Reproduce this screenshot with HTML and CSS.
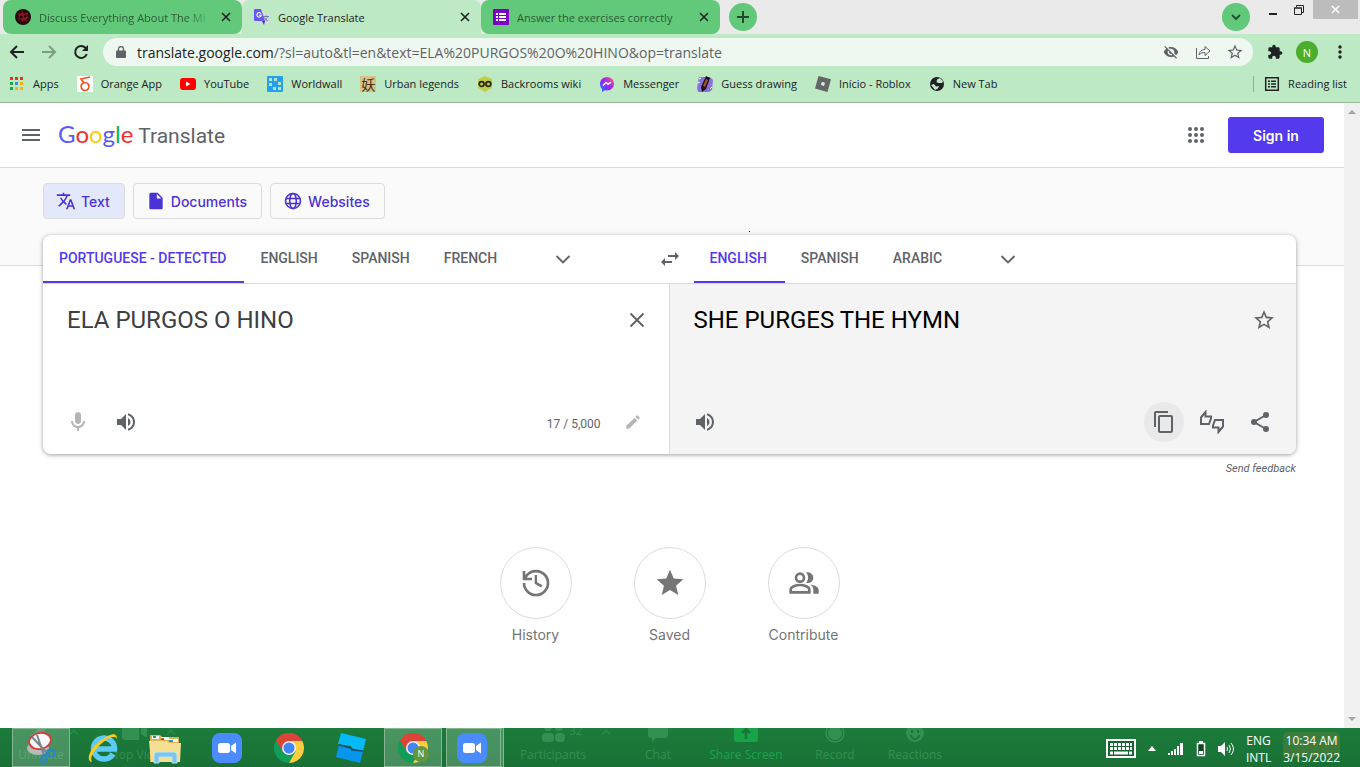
FILE: index.html
```html
<!DOCTYPE html>
<html lang="en">
<head>
    <meta charset="UTF-8">
    <meta name="viewport" content="width=device-width, initial-scale=1.0">
    <title>Google Translate</title>
    <link rel="stylesheet" href="styles.css">
</head>
<body>
    <!-- Shared icons -->
    <svg class="defs" width="0" height="0">
        <symbol id="i-close" viewBox="0 0 10 10"><path d="M1 1l8 8M9 1L1 9" fill="none" stroke="currentColor" stroke-width="1.6"/></symbol>
        <symbol id="i-volume" viewBox="0 0 24 24"><path d="M3 9v6h4l5 5V4L7 9H3zm13.500 3c0-1.770-1.020-3.290-2.500-4.030v8.050c1.480-.730 2.500-2.250 2.500-4.020zM14 3.230v2.060c2.890.860 5 3.540 5 6.710s-2.110 5.850-5 6.710v2.060c4.010-.910 7-4.490 7-8.770s-2.990-7.860-7-8.770z"/></symbol>
        <symbol id="i-star" viewBox="0 0 24 24"><path d="M22 9.240l-7.190-.620L12 2 9.190 8.630 2 9.240l5.460 4.730L5.820 21 12 17.270 18.180 21l-1.630-7.030L22 9.240zM12 15.400l-3.760 2.270 1-4.280-3.320-2.880 4.380-.380L12 6.100l1.710 4.040 4.380.380-3.320 2.880 1 4.280L12 15.400z"/></symbol>
        <symbol id="i-chevron" viewBox="0 0 24 24"><path d="M5.500 9l6.500 6.500L18.500 9" fill="none" stroke="currentColor" stroke-width="1.800"/></symbol>
        <symbol id="i-zoom" viewBox="0 0 32 32"><rect x="1" y="1" width="30" height="30" rx="8" fill="#4a8cff"/><rect x="7" y="11" width="12" height="10" rx="2.500" fill="#fff"/><path d="M20 14l5-3.500v11L20 18z" fill="#fff"/></symbol>
        <symbol id="i-chrome" viewBox="0 0 32 32"><path d="M16 16L3 8.500A15 15 0 0 1 29 8.500z" fill="#db4437"/><path d="M16 16l-13-7.500A15 15 0 0 0 16 31l7-12z" fill="#0f9d58"/><path d="M16 9h13.300A15 15 0 0 1 16 31l6.500-11.500z" fill="#ffcd40"/><path d="M3 8.500L9.800 19.500 16 9h13.200A15 15 0 0 0 3 8.500z" fill="#db4437"/><circle cx="16" cy="16" r="7" fill="#f1f1f1"/><circle cx="16" cy="16" r="5.500" fill="#4285f4"/></symbol>
    </svg>

    <!-- Tab strip -->
    <div class="tabstrip">
        <div class="tab">
            <svg class="favicon" viewBox="0 0 16 16"><circle cx="8" cy="8" r="8" fill="#250a0d"/><path d="M3 4l3 1 1-3 2 3 4-2-1 4 2 2-3 1 1 3-3-2-2 2-1-3-3 1 1-4z" fill="#8d1822"/><circle cx="6" cy="8" r="1.500" fill="#180406"/><circle cx="10" cy="7" r="1.500" fill="#180406"/></svg>
            <span class="tab-title fade">Discuss Everything About The Mi</span>
            <button class="tab-close" aria-label="Close tab"><svg width="10" height="10"><use href="#i-close"/></svg></button>
        </div>
        <div class="tab active">
            <svg class="favicon" viewBox="0 0 16 16"><rect x="6" y="4" width="10" height="11" rx="1" fill="#d5d9e2"/><path d="M9 7.500h6M12 6.500v1M10 12c2-1 3-2.500 3.500-4.500M10.500 8.500c1 2 2 3 3.500 3.500" stroke="#70839c" fill="none"/><path d="M1 0h6l4 12H1a1 1 0 0 1-1-1V1a1 1 0 0 1 1-1z" fill="#6558f5"/><path d="M8 12h3l-1 4z" fill="#3a35b5"/><path d="M7 4.700A2.200 2.200 0 1 0 7.300 6.200H5.200" fill="none" stroke="#fff" stroke-width="1.100"/></svg>
            <span class="tab-title">Google Translate</span>
            <button class="tab-close" aria-label="Close tab"><svg width="10" height="10"><use href="#i-close"/></svg></button>
        </div>
        <div class="tab">
            <svg class="favicon" viewBox="0 0 16 16"><rect width="16" height="16" rx="1" fill="#7d00c4"/><path d="M3 4h2v2H3zM6 4h7v2H6zM3 7h2v2H3zM6 7h7v2H6zM3 10h2v2H3zM6 10h7v2H6z" fill="#fff"/></svg>
            <span class="tab-title">Answer the exercises correctly</span>
            <button class="tab-close" aria-label="Close tab"><svg width="10" height="10"><use href="#i-close"/></svg></button>
        </div>
        <button class="round-btn" aria-label="New tab"><svg width="14" height="14" viewBox="0 0 14 14"><path d="M7 1v12M1 7h12" stroke="currentColor" stroke-width="2"/></svg></button>
        <div class="window-controls">
            <button class="round-btn" aria-label="Search tabs"><svg width="12" height="12" viewBox="0 0 12 12"><path d="M2 4l4 4 4-4" fill="none" stroke="currentColor" stroke-width="1.800"/></svg></button>
            <button class="win-btn" aria-label="Minimize"><svg width="10" height="12" viewBox="0 0 10 12"><path d="M1 9h8v2H1z"/></svg></button>
            <button class="win-btn" aria-label="Restore"><svg width="10" height="10" viewBox="0 0 10 10"><path d="M.5 3h7v6.500h-7zM0 3h8M2.500 2V.5h7v7H8" fill="none" stroke="currentColor"/></svg></button>
            <button class="win-btn win-close" aria-label="Close"><svg width="9" height="9"><use href="#i-close"/></svg></button>
        </div>
    </div>

    <!-- Address bar -->
    <div class="toolbar">
        <button class="nav-btn" aria-label="Back"><svg width="16" height="16" viewBox="0 0 16 16"><path d="M15 8H2M8 2L2 8l6 6" fill="none" stroke="currentColor" stroke-width="2"/></svg></button>
        <button class="nav-btn dim" aria-label="Forward"><svg width="16" height="16" viewBox="0 0 16 16"><path d="M1 8h13M8 2l6 6-6 6" fill="none" stroke="currentColor" stroke-width="2"/></svg></button>
        <button class="nav-btn" aria-label="Reload"><svg width="16" height="16" viewBox="0 0 16 16"><path d="M13.800 10A6 6 0 1 1 12.500 3.800L14 5.500" fill="none" stroke="currentColor" stroke-width="2"/><path d="M15 1v6H9z"/></svg></button>
        <div class="omnibox">
            <svg class="lock" width="10" height="12" viewBox="0 0 10 12"><path d="M1 4.500h8a1 1 0 0 1 1 1V11a1 1 0 0 1-1 1H1a1 1 0 0 1-1-1V5.500a1 1 0 0 1 1-1z"/><path d="M2.500 5V3a2.500 2.500 0 0 1 5 0v2" fill="none" stroke="currentColor" stroke-width="1.300"/></svg>
            <label for="address">translate.google.com</label>
            <input type="text" id="address" value="/?sl=auto&amp;tl=en&amp;text=ELA%20PURGOS%20O%20HINO&amp;op=translate">
            <button class="nav-btn" aria-label="Third-party cookies blocked"><svg width="16" height="16" viewBox="0 0 24 24"><path d="M12 7c2.760 0 5 2.240 5 5 0 .650-.130 1.260-.360 1.830l2.920 2.920c1.510-1.260 2.700-2.890 3.430-4.750-1.730-4.390-6-7.500-11-7.500-1.400 0-2.740.250-3.980.700l2.160 2.160C10.740 7.130 11.350 7 12 7zM2 4.270l2.280 2.280.460.460C3.080 8.300 1.780 10.020 1 12c1.730 4.390 6 7.500 11 7.500 1.550 0 3.030-.300 4.380-.840l.420.420L19.730 22 21 20.730 3.270 3 2 4.270zM7.530 9.800l1.550 1.550c-.050.210-.080.430-.080.650 0 1.660 1.340 3 3 3 .220 0 .440-.030.650-.080l1.550 1.550c-.670.330-1.410.530-2.200.530-2.760 0-5-2.240-5-5 0-.790.200-1.530.530-2.200z"/></svg></button>
            <button class="nav-btn" aria-label="Share this page"><svg width="16" height="16" viewBox="0 0 16 16" fill="none" stroke="currentColor"><path d="M1.500 4v10.500h12V12M4 11c.500-4 3-5.500 6-5.500v-3L15 7l-5 4.500v-3c-2.500 0-4.500.500-6 2.500z"/></svg></button>
            <button class="nav-btn" aria-label="Bookmark this page"><svg width="18" height="18"><use href="#i-star"/></svg></button>
        </div>
        <button class="nav-btn" aria-label="Extensions"><svg width="16" height="16" viewBox="0 0 24 24"><path d="M20.500 11H19V7c0-1.100-.900-2-2-2h-4V3.500C13 2.120 11.880 1 10.500 1S8 2.120 8 3.500V5H4c-1.100 0-1.990.900-1.990 2v3.800H3.500c1.490 0 2.700 1.210 2.700 2.700s-1.210 2.700-2.700 2.700H2V20c0 1.100.900 2 2 2h3.800v-1.500c0-1.490 1.210-2.700 2.700-2.700s2.700 1.210 2.700 2.700V22H17c1.100 0 2-.900 2-2v-4h1.500c1.380 0 2.500-1.120 2.500-2.500S21.880 11 20.500 11z"/></svg></button>
        <button class="avatar">N</button>
        <button class="nav-btn" aria-label="Menu"><svg width="4" height="14" viewBox="0 0 4 14"><circle cx="2" cy="2" r="1.700"/><circle cx="2" cy="7" r="1.700"/><circle cx="2" cy="12" r="1.700"/></svg></button>
    </div>

    <!-- Bookmarks -->
    <nav class="bookmarks">
        <a href="#"><svg viewBox="0 0 16 16"><path d="M1 1h3v3H1zM6 1h3v3H6zM11 1h3v3h-3z" fill="#e53328"/><path d="M1 6h3v3H1z" fill="#1ba84c"/><path d="M6 6h3v3H6z" fill="#4285f4"/><path d="M11 6h3v3h-3zM6 11h3v3H6zM11 11h3v3h-3z" fill="#f7b50c"/><path d="M1 11h3v3H1z" fill="#1ba84c"/></svg>Apps</a>
        <a href="#"><svg viewBox="0 0 16 16"><rect width="16" height="16" fill="#fff"/><path d="M13 1L4 3l3 4M8 6.500a4 4 0 1 0 .1 0" fill="none" stroke="#f4511e" stroke-width="1.700"/></svg>Orange App</a>
        <a href="#"><svg viewBox="0 0 16 16"><rect y="2" width="16" height="12" rx="3" fill="#f00"/><path d="M6 5.500v5L10.500 8z" fill="#fff"/></svg>YouTube</a>
        <a href="#"><svg viewBox="0 0 16 16"><rect width="16" height="16" rx="1" fill="#24a0ed"/><path d="M2 2h3v3H2zM7 2h3v3H7zM2 7h3v3H2zM11 6h3v3h-3zM6 11h3v3H6zM11 11h3v3h-3z" fill="#b5e3cf"/></svg>Worldwall</a>
        <a href="#"><span class="kanji">妖</span>Urban legends</a>
        <a href="#"><svg viewBox="0 0 16 16"><path d="M8 0l7 3v9l-7 4-7-4V3z" fill="#c3cf49"/><g fill="none" stroke="#272e16" stroke-width="1.800"><circle cx="4.600" cy="8" r="2.400"/><circle cx="11.400" cy="8" r="2.400"/></g></svg>Backrooms wiki</a>
        <a href="#"><svg viewBox="0 0 16 16"><defs><linearGradient id="msg" x1="0" y1="1" x2="1" y2="0"><stop offset="0" stop-color="#0a84ff"/><stop offset=".5" stop-color="#a01cff"/><stop offset="1" stop-color="#ff5e72"/></linearGradient></defs><path d="M8 1c4 0 7 3 7 6.800S12 14.500 8 14.500L6 14.300 3 16v-3C1.500 11.500 1 10 1 7.800 1 4 4 1 8 1z" fill="url(#msg)"/><path d="M4 9.500L7 6.500l2 1.700 3-2" fill="none" stroke="#fff" stroke-width="1.600"/></svg>Messenger</a>
        <a href="#"><svg viewBox="0 0 16 16"><path d="M2 1h11l3 3-1 10-3 2H1l-1-4z" fill="#8a72dc"/><path d="M9 0l4 2-4 11-4 3-1-5z" fill="#1b1319"/><path d="M9 3l2 1-3 7-2-1z" fill="#a9522b"/><path d="M2 3l2-1M1 7l2-1M13 13l2-2" stroke="#fff"/></svg>Guess drawing</a>
        <a href="#"><svg viewBox="0 0 16 16"><path d="M3.500 0L16 3.300 12.500 16 0 12.500z" fill="#646667"/><path d="M6.800 5.800l3.200.900-.900 3.200-3.200-.900z" fill="#d6eedb"/></svg>Início - Roblox</a>
        <a href="#"><svg viewBox="0 0 16 16"><circle cx="8" cy="8" r="7" fill="#202124"/><path d="M8 3.500l3-1.500 3 3-1 2H9L7.500 6zM2 9l3-1 2 2.500 3-.5-1 2.500-3 1.500z" fill="#bde9c4"/></svg>New Tab</a>
        <a href="#" class="reading-list"><svg viewBox="0 0 16 16"><path d="M1.700 1.700h12.600v12.600H1.700z" fill="none" stroke="currentColor" stroke-width="1.500"/><path d="M4 4.500h2v1.500H4zM7 4.500h5v1.500H7zM4 7.300h2v1.500H4zM7 7.300h5v1.500H7zM4 10h2v1.500H4zM7 10h5v1.500H7z"/></svg>Reading list</a>
    </nav>

    <!-- Page -->
    <div class="viewport">
        <div class="page">
            <header class="header">
                <button class="icon-btn" aria-label="Main menu"><svg width="18" height="12" viewBox="0 0 18 12"><path d="M0 0h18v2H0zM0 5h18v2H0zM0 10h18v2H0z"/></svg></button>
                <a href="#" class="logo"><span class="google"><span class="b">G</span><span class="r">o</span><span class="y">o</span><span class="b">g</span><span class="g">l</span><span class="r">e</span></span> <span class="product">Translate</span></a>
                <button class="icon-btn apps" aria-label="Google apps"><svg width="16" height="16" viewBox="0 0 16 16"><g><circle cx="2" cy="2" r="2"/><circle cx="8" cy="2" r="2"/><circle cx="14" cy="2" r="2"/><circle cx="2" cy="8" r="2"/><circle cx="8" cy="8" r="2"/><circle cx="14" cy="8" r="2"/><circle cx="2" cy="14" r="2"/><circle cx="8" cy="14" r="2"/><circle cx="14" cy="14" r="2"/></g></svg></button>
                <button class="sign-in">Sign in</button>
            </header>

            <div class="modes">
                <button class="mode selected"><svg width="20" height="20" viewBox="0 0 24 24"><path d="M12.870 15.070l-2.540-2.510.030-.030c1.740-1.940 2.980-4.170 3.710-6.530H17V4h-7V2H8v2H1v1.990h11.170C11.500 7.920 10.440 9.750 9 11.350 8.070 10.320 7.300 9.190 6.690 8h-2c.730 1.630 1.730 3.170 2.980 4.560l-5.090 5.020L4 19l5-5 3.110 3.110.760-2.040zM18.500 10h-2L12 22h2l1.120-3h4.750L21 22h2l-4.500-12zm-2.620 7l1.620-4.330L19.120 17h-3.240z"/></svg>Text</button>
                <button class="mode"><svg width="20" height="20" viewBox="0 0 24 24"><path d="M6 2c-1.100 0-2 .9-2 2v16c0 1.100.9 2 2 2h12c1.100 0 2-.9 2-2V8l-6-6H6zm7 7V3.500L18.500 9H13z"/></svg>Documents</button>
                <button class="mode"><svg width="20" height="20" viewBox="0 0 24 24" fill="none" stroke="currentColor" stroke-width="1.900"><circle cx="12" cy="12" r="9"/><ellipse cx="12" cy="12" rx="4" ry="9"/><path d="M4 9h16M4 15h16"/></svg>Websites</button>
            </div>

            <main class="content">
                <div class="card">
                    <span class="speck"></span>
                    <div class="languages">
                        <div class="lang-group">
                            <button class="lang selected">PORTUGUESE - DETECTED</button>
                            <button class="lang">ENGLISH</button>
                            <button class="lang">SPANISH</button>
                            <button class="lang">FRENCH</button>
                            <button class="more" aria-label="More source languages"><svg width="24" height="24"><use href="#i-chevron"/></svg></button>
                        </div>
                        <button class="swap" aria-label="Swap languages"><svg width="24" height="24" viewBox="0 0 24 24"><path d="M6.990 11L3 15l3.990 4v-3H14v-2H6.990v-3zM21 9l-3.990-4v3H10v2h7.010v3L21 9z"/></svg></button>
                        <div class="lang-group">
                            <button class="lang selected">ENGLISH</button>
                            <button class="lang">SPANISH</button>
                            <button class="lang">ARABIC</button>
                            <button class="more" aria-label="More target languages"><svg width="24" height="24"><use href="#i-chevron"/></svg></button>
                        </div>
                    </div>
                    <div class="panes">
                        <div class="pane source">
                            <div class="pane-top">
                                <textarea rows="1" aria-label="Source text">ELA PURGOS O HINO</textarea>
                                <button class="icon-btn" aria-label="Clear"><svg width="24" height="24" viewBox="0 0 24 24"><path d="M5.500 5.500l13 13M18.500 5.500l-13 13" fill="none" stroke="currentColor" stroke-width="1.900"/></svg></button>
                            </div>
                            <div class="pane-bottom">
                                <button class="icon-btn faded" aria-label="Translate by voice"><svg width="24" height="24" viewBox="0 0 24 24"><path d="M12 14c1.660 0 3-1.340 3-3V5c0-1.660-1.340-3-3-3S9 3.340 9 5v6c0 1.660 1.340 3 3 3z"/><path d="M17 11c0 2.760-2.240 5-5 5s-5-2.240-5-5H5c0 3.530 2.610 6.430 6 6.920V21h2v-3.080c3.390-.490 6-3.390 6-6.920h-2z"/></svg></button>
                                <button class="icon-btn" aria-label="Listen to source text"><svg width="24" height="24"><use href="#i-volume"/></svg></button>
                                <span class="count">17 / 5,000</span>
                                <button class="icon-btn faded" aria-label="Handwrite"><svg width="18" height="18" viewBox="0 0 24 24"><path d="M3 17.250V21h3.750L17.810 9.940l-3.750-3.750L3 17.250zM20.710 7.040c.390-.390.390-1.020 0-1.410l-2.340-2.340c-.390-.390-1.020-.390-1.410 0l-1.830 1.830 3.750 3.750 1.830-1.830z"/></svg></button>
                            </div>
                        </div>
                        <div class="pane result">
                            <div class="pane-top">
                                <p>SHE PURGES THE HYMN</p>
                                <button class="icon-btn" aria-label="Save translation"><svg width="24" height="24"><use href="#i-star"/></svg></button>
                            </div>
                            <div class="pane-bottom">
                                <button class="icon-btn" aria-label="Listen to translation"><svg width="24" height="24"><use href="#i-volume"/></svg></button>
                                <button class="icon-btn copy" aria-label="Copy translation"><svg width="24" height="24" viewBox="0 0 24 24"><path d="M16 1H4c-1.100 0-2 .9-2 2v14h2V3h12V1zm3 4H8c-1.100 0-2 .9-2 2v14c0 1.100.9 2 2 2h11c1.100 0 2-.9 2-2V7c0-1.100-.9-2-2-2zm0 16H8V7h11v14z"/></svg></button>
                                <button class="icon-btn" aria-label="Rate this translation"><svg width="26" height="24" viewBox="0 0 26 24" fill="none" stroke="currentColor" stroke-width="2"><path d="M2 7.500L6.500 2v4.500H12v2L10 14H2zM24 16.500L19.500 22v-4.500H14v-2l2-5.500h8z"/></svg></button>
                                <button class="icon-btn" aria-label="Share translation"><svg width="24" height="24" viewBox="0 0 24 24"><path d="M18 5L6 12l12 7" fill="none" stroke="currentColor" stroke-width="2"/><circle cx="18" cy="5" r="3"/><circle cx="6" cy="12" r="3"/><circle cx="18" cy="19" r="3"/></svg></button>
                            </div>
                        </div>
                    </div>
                </div>
                <a href="#" class="feedback">Send feedback</a>

                <div class="shortcuts">
                    <a href="#"><span class="circle"><svg width="32" height="32" viewBox="0 0 24 24"><path d="M12 2a10 10 0 0 0-8 4V3H2v7h7V8H5.100A8 8 0 1 1 4 12H2a10 10 0 1 0 10-10zm-1 4v6.500l4.800 2.900 1-1.700-4-2.300V6H11z"/></svg></span>History</a>
                    <a href="#"><span class="circle"><svg width="32" height="32" viewBox="0 0 24 24"><path d="M12 17.270L18.180 21l-1.640-7.030L22 9.240l-7.190-.610L12 2 9.190 8.630 2 9.240l5.460 4.730L5.820 21z"/></svg></span>Saved</a>
                    <a href="#"><span class="circle"><svg width="32" height="32" viewBox="0 0 24 24"><g fill="none" stroke="currentColor" stroke-width="2"><circle cx="9" cy="8" r="3"/><path d="M2 19v-2c0-2 4-3.500 7-3.500s7 1.500 7 3.500v2z"/></g><path d="M15 12a4 4 0 0 0 0-8c-.4 0-.9.100-1.300.200a6 6 0 0 1 0 7.600c.4.100.9.200 1.300.200zM16.700 13.100c1.400 1 2.300 2.200 2.300 3.900v3h4v-3c0-2.200-3.400-3.500-6.300-3.900z"/></svg></span>Contribute</a>
                </div>
            </main>
        </div>
        <div class="scrollbar"><span class="arrow up"></span><span class="arrow down"></span></div>
    </div>

    <!-- Taskbar -->
    <footer class="taskbar">
        <div class="meeting">
            <span class="m-unmute"><svg viewBox="0 0 32 24"><path d="M12 0h8v8a4 4 0 0 1-8 0zM6 16L26 2" stroke="currentColor" stroke-width="2"/></svg><b></b>Unmute</span>
            <span class="m-video"><svg viewBox="0 0 32 24"><path d="M0 2h17v18H3a3 3 0 0 1-3-3zM19 8l6-4v14l-6-4z"/></svg><b></b>Stop Video</span>
            <span class="m-people"><svg viewBox="0 0 32 24"><circle cx="11" cy="7" r="4"/><circle cx="22" cy="7" r="4"/><rect x="5" y="13" width="12" height="9" rx="4"/><rect x="18" y="13" width="10" height="9" rx="4"/></svg><i>32</i><b></b>Participants</span>
            <span class="m-chat"><svg viewBox="0 0 32 24"><path d="M6 4h20v11a3 3 0 0 1-3 3H14l-4 4v-4H9a3 3 0 0 1-3-3z"/></svg>Chat</span>
            <span class="m-share"><svg viewBox="0 0 32 24"><path d="M4 0h24v19a3 3 0 0 1-3 3H7a3 3 0 0 1-3-3z"/><path d="M16 19V10M12 13l4-4 4 4" fill="none" stroke="#197638" stroke-width="2.500"/></svg>Share Screen</span>
            <span class="m-record"><svg viewBox="0 0 32 24"><circle cx="16" cy="13" r="9" fill="none" stroke="currentColor" stroke-width="1.500"/><circle cx="16" cy="13" r="7"/></svg>Record</span>
            <span class="m-react"><svg viewBox="0 0 32 24"><circle cx="16" cy="13" r="9"/><path d="M12 15a4 4 0 0 0 8 0M13 10v3M19 10v3" fill="none" stroke="#197638" stroke-width="2"/></svg>Reactions</span>
        </div>
        <div class="task-apps">
            <button class="task open" aria-label="Snipping Tool"><svg viewBox="0 0 32 32"><ellipse cx="13" cy="16" rx="11" ry="7" fill="#b5bdb7"/><ellipse cx="15" cy="9" rx="11" ry="8" fill="#f6f8f9" stroke="#d93b3b" stroke-width="1.800" transform="rotate(-12 15 9)"/><path d="M7 5l16 17M12 3l7 20" stroke="#79838b" stroke-width="2"/><g fill="none" stroke="#2688cf" stroke-width="2.200"><ellipse cx="26" cy="21" rx="4" ry="3" transform="rotate(25 26 21)"/><ellipse cx="19" cy="27" rx="2.500" ry="4" transform="rotate(20 19 27)"/></g></svg></button>
            <button class="task" aria-label="Internet Explorer"><svg viewBox="0 0 32 32"><path d="M26 22A10.500 10.500 0 1 1 27.500 17H9" fill="none" stroke="#5ccbf7" stroke-width="5.500"/><path d="M5 30C-2 29 3 16 13 9S30-1 30 7c-1-4-8-2-15 4S2 26 5 30z" fill="#ffca1b"/></svg></button>
            <button class="task" aria-label="File Explorer"><svg viewBox="0 0 32 32"><path d="M1 3h10l2 2h17v25H1z" fill="#dcb34e"/><path d="M3 4h7v3H3z" fill="#fff"/><path d="M4 4h3v2H4z" fill="#21a447"/><path d="M12 5h8v3h-8z" fill="#fff"/><path d="M12 6h3v2h-3z" fill="#db4437"/><path d="M20 7h9v3h-9z" fill="#fff"/><path d="M20 8h4v2h-4z" fill="#1597e5"/><path d="M0 9h18l2 2h12l-1 19H2z" fill="#f5df94"/><path d="M5 31V23q0-3 3-3h17q3 0 3 3v8h-5v-6H10v6z" fill="#7dc5ea" stroke="#b9e4f9"/></svg></button>
            <button class="task" aria-label="Zoom"><svg><use href="#i-zoom"/></svg></button>
            <button class="task" aria-label="Chrome"><svg><use href="#i-chrome"/></svg></button>
            <button class="task" aria-label="Roblox Studio"><svg viewBox="0 0 32 32"><path d="M6 1l25 6-3 12-12-3v-2L3 12z" fill="#06baf7"/><path d="M4 13l12 3v2l12 1-3 12L1 25z" fill="#0796ee"/><path d="M4 13l12 3 1 2 11 1" fill="none" stroke="#064d77" stroke-width="1.500"/></svg></button>
            <button class="task open" aria-label="Chrome window"><svg><use href="#i-chrome"/></svg><span class="badge">N</span></button>
            <button class="task open stacked" aria-label="Zoom Meeting"><svg><use href="#i-zoom"/></svg></button>
        </div>
        <div class="tray">
            <svg width="30" height="19" viewBox="0 0 30 19"><rect x="1" y="1" width="28" height="17" fill="#176430" stroke="#fff" stroke-width="2"/><path d="M4 5.500h22M4 9.500h22" stroke="#fff" stroke-width="3" stroke-dasharray="3 1"/><path d="M4 14h3m1 0h14m1 0h3" stroke="#fff" stroke-width="3"/></svg>
            <svg width="8" height="5" viewBox="0 0 8 5"><path d="M0 5l4-5 4 5z"/></svg>
            <svg width="16" height="12" viewBox="0 0 16 12"><path d="M0 10h2v2H0zM3 8h2v4H3zM6 6h2v6H6zM9 3h2v9H9zM12 0h3v12h-3z"/></svg>
            <svg width="10" height="16" viewBox="0 0 10 16"><path d="M3 0h4v2H3z"/><path d="M1.500 2.500h7v12h-7z" fill="#142" stroke="#fff" stroke-width="1.500"/><path d="M3 10h4v3H3z"/></svg>
            <svg width="16" height="14" viewBox="0 0 16 14"><path d="M0 4h3l4-4v14l-4-4H0z"/><path d="M9 5q1 2 0 4M11 3q3 4 0 8M13 1q5 6 0 12" fill="none" stroke="#fff"/></svg>
            <div class="tray-text">ENG<br>INTL</div>
            <div class="tray-text clock">10:34 AM<br>3/15/2022</div>
        </div>
    </footer>
</body>
</html>
```
FILE: styles.css
```css
* {
    box-sizing: border-box;
}
body {
    margin: 0;
    min-height: 100vh;
    display: flex;
    flex-direction: column;
    font-family: Roboto, Arial, sans-serif;
    background: #fff;
}
button {
    border: none;
    background: none;
    padding: 0;
    margin: 0;
    font: inherit;
    color: inherit;
    cursor: pointer;
    display: flex;
    align-items: center;
    justify-content: center;
    flex-shrink: 0;
}
a {
    color: inherit;
    text-decoration: none;
}
svg {
    flex-shrink: 0;
}
svg:not([fill]) {
    fill: currentColor;
}
.defs {
    position: absolute;
}

/* Browser window */
.tabstrip, .toolbar, .bookmarks {
    font-family: "Open Sans", "Noto Sans", sans-serif;
    font-size: 11px;
    color: #202124;
}
.tabstrip {
    display: flex;
    height: 34px;
    padding-left: 3px;
    background: #eaeaea;
}
.tab {
    display: flex;
    align-items: center;
    width: 239px;
    height: 34px;
    padding: 0 10px 0 12px;
    border-radius: 8px;
    background: #61c979;
    color: #2d5938;
}
.tab.active {
    background: #bde9c4;
    color: #202124;
    border-radius: 8px 8px 0 0;
}
.favicon {
    width: 16px;
    height: 16px;
}
.tab-title {
    flex: 1;
    min-width: 0;
    margin: 0 8px;
    overflow: hidden;
    white-space: nowrap;
}
.tab-title.fade {
    -webkit-mask-image: linear-gradient(to right, #000 85%, transparent);
    mask-image: linear-gradient(to right, #000 85%, transparent);
}
.tab-close {
    width: 12px;
    height: 16px;
    color: #202124;
}
.round-btn {
    width: 28px;
    height: 28px;
    margin: 3px 0 0 9px;
    border-radius: 50%;
    background: #61c979;
    color: #22492c;
}
.window-controls {
    display: flex;
    margin-left: auto;
}
.win-btn {
    width: 26px;
    height: 19px;
}
.window-controls .round-btn {
    margin-right: 10px;
}
.win-close {
    width: 45px;
    margin: 0 2px 0 1px;
    background: #bcbcbc;
    color: #fff;
}
.toolbar {
    display: flex;
    align-items: center;
    height: 36px;
    padding: 0 4px 0 1px;
    background: #bde9c4;
}
.nav-btn {
    width: 32px;
    height: 28px;
}
.nav-btn.dim {
    color: #7b9d82;
}
.omnibox {
    flex: 1;
    display: flex;
    align-items: center;
    height: 28px;
    margin: 0 6px;
    padding: 0 2px 0 13px;
    border-radius: 14px;
    background: #eef8f0;
    font-size: 14px;
    color: #5f6368;
}
.omnibox label {
    margin-left: 11px;
    color: #202124;
}
.omnibox input {
    flex: 1;
    min-width: 0;
    padding: 0;
    border: none;
    background: none;
    font: inherit;
    color: inherit;
}
.avatar {
    width: 22px;
    height: 22px;
    margin: 0 6px 0 5px;
    border-radius: 50%;
    background: #4bae2c;
    color: #fff;
}
.bookmarks {
    display: flex;
    align-items: center;
    gap: 18px;
    height: 33px;
    padding: 0 13px 5px 9px;
    background: #bde9c4;
    border-bottom: 1px solid #95b89a;
    white-space: nowrap;
}
.bookmarks a {
    display: flex;
    align-items: center;
    gap: 8px;
}
.bookmarks svg {
    width: 16px;
    height: 16px;
}
.kanji {
    width: 16px;
    height: 16px;
    background: #d8c28b;
    color: #4a3310;
    font: 14px/16px "Noto Sans CJK JP", sans-serif;
    text-align: center;
}
.bookmarks .reading-list {
    margin-left: auto;
    padding-left: 10px;
    border-left: 1px solid #8db696;
}

/* Page */
.viewport {
    flex: 1;
    display: flex;
}
.page {
    flex: 1;
    min-width: 0;
    color: #5f6368;
}
.scrollbar {
    display: flex;
    flex-direction: column;
    justify-content: space-between;
    align-items: center;
    width: 16px;
    padding: 7px 0;
    background: #f0f0f0;
}
.arrow {
    border: 4px solid transparent;
}
.arrow.up {
    border-top: none;
    border-bottom-color: #a3a3a3;
}
.arrow.down {
    border-bottom: none;
    border-top-color: #a3a3a3;
}
.header {
    display: flex;
    align-items: center;
    height: 65px;
    padding: 0 20px 0 11px;
    border-bottom: 1px solid #dadce0;
}
.icon-btn {
    width: 40px;
    height: 40px;
    border-radius: 50%;
}
.logo {
    margin-left: 7px;
    padding-bottom: 3px;
    font-size: 21px;
}
.google {
    font-family: Lato, sans-serif;
    font-size: 24px;
}
.google .b { color: #5f57f7; }
.google .r { color: #f22d2d; }
.google .y { color: #fbcb0a; }
.google .g { color: #0fb457; }
.apps {
    margin-left: auto;
}
.sign-in {
    width: 96px;
    height: 36px;
    margin-left: 12px;
    border-radius: 3px;
    background: #533aed;
    color: #fff;
    font: 600 14px Inter, sans-serif;
}
.modes {
    display: flex;
    gap: 8px;
    height: 98px;
    padding: 15px 43px;
    background: #fafafa;
    border-bottom: 1px solid #dadce0;
}
.mode {
    height: 36px;
    gap: 5px;
    padding: 0 14px 0 12px;
    border: 1px solid #dadce0;
    border-radius: 4px;
    color: #4b32d5;
    font: 500 14px Inter, sans-serif;
}
.mode.selected {
    background: #e4e8fb;
}
.content {
    display: flex;
    flex-direction: column;
    margin-top: -31px;
    padding: 0 48px 0 43px;
}
.card {
    position: relative;
    border-radius: 8px;
    background: #fff;
    box-shadow: 0 1px 4px rgba(60,64,67,0.5);
}
/* hot spot of the text cursor */
.speck {
    position: absolute;
    top: -4px;
    left: 56%;
    width: 1px;
    height: 1px;
    margin-left: 4px;
    background: #000;
}
.languages {
    display: flex;
    height: 49px;
    border-bottom: 1px solid #dadce0;
}
.lang-group {
    flex: 1;
    display: flex;
}
.lang {
    height: 48px;
    padding: 0 18px 0 16px;
    border-bottom: 2px solid transparent;
    font-size: 14px;
    font-weight: 500;
    white-space: nowrap;
}
.lang.selected {
    color: #5339ed;
    border-bottom-color: #5339ed;
}
.more, .swap {
    width: 48px;
    height: 48px;
}
.more {
    margin-left: 24px;
}
.panes {
    display: grid;
    grid-template-columns: 1fr 1fr;
}
.pane {
    display: flex;
    flex-direction: column;
    justify-content: space-between;
    height: 170px;
    padding: 16px 12px 12px 24px;
}
.source {
    border-right: 1px solid #dadce0;
}
.result {
    border-radius: 0 0 8px 0;
    background: #f4f4f4;
}
.pane-top, .pane-bottom {
    display: flex;
    align-items: center;
}
.pane-top textarea, .pane-top p {
    flex: 1;
    min-width: 0;
    height: 40px;
    margin: 0;
    padding: 0;
    border: none;
    background: none;
    resize: none;
    overflow: hidden;
    font: 24px/40px Roboto, sans-serif;
    color: #3c4043;
}
.pane-top p {
    color: #000;
}
.pane-bottom {
    gap: 8px;
    margin-left: -9px;
    margin-right: 4px;
}
.faded {
    color: #b4b5b7;
}
.count {
    margin: 0 4px 0 auto;
    padding-top: 3px;
    font-size: 12px;
}
.copy {
    margin-left: auto;
    background: #e9e9e9;
}
.feedback {
    align-self: flex-end;
    margin-top: 8px;
    font-size: 11px;
    line-height: 14px;
    font-style: italic;
}
.shortcuts {
    display: flex;
    justify-content: center;
    gap: 34px;
    margin-top: 71px;
    color: #757575;
    font: 14px/20px Inter, sans-serif;
}
.shortcuts a {
    display: flex;
    flex-direction: column;
    align-items: center;
    gap: 6px;
    width: 100px;
}
.circle {
    display: flex;
    align-items: center;
    justify-content: center;
    width: 72px;
    height: 72px;
    border: 1px solid #dadce0;
    border-radius: 50%;
}

/* Taskbar */
.taskbar {
    position: relative;
    display: flex;
    justify-content: space-between;
    height: 39px;
    background: linear-gradient(#1b7c3b, #1a7036);
    font-family: "Open Sans", "Noto Sans", sans-serif;
    font-size: 12px;
    color: #fff;
}
.task-apps {
    position: relative;
    display: flex;
    gap: 4px;
    padding-left: 12px;
}
.task {
    position: relative;
    width: 58px;
    height: 39px;
}
.task svg {
    width: 32px;
    height: 32px;
}
.task.open {
    border: 1px solid #86b594;
    background: rgba(255,255,255,0.2);
}
.task.stacked {
    padding-right: 3px;
    border-right: 4px double #86b594;
}
.badge {
    position: absolute;
    right: 12px;
    bottom: 4px;
    width: 16px;
    height: 16px;
    border-radius: 50%;
    background: #65973a;
    font-size: 9px;
    line-height: 16px;
}
/* faded meeting controls showing through the bar */
.meeting {
    position: absolute;
    inset: 0;
    overflow: hidden;
    color: #329052;
}
.meeting span {
    position: absolute;
    top: -8px;
    display: flex;
    flex-direction: column;
    align-items: center;
    width: 100px;
    line-height: 22px;
}
.meeting svg {
    width: 32px;
    height: 24px;
}
.meeting i {
    position: absolute;
    left: 66px;
    top: 0;
    font-style: normal;
}
.meeting b {
    position: absolute;
    left: 100px;
    top: 11px;
    width: 6px;
    height: 6px;
    border: solid #329052;
    border-width: 1px 0 0 1px;
    transform: rotate(45deg);
}
.meeting .m-unmute b, .meeting .m-video b {
    left: 80px;
}
.m-unmute { left: -9px; }
.m-video { left: 88px; }
.m-people { left: 503px; }
.m-chat { left: 608px; }
.meeting .m-share { left: 696px; color: #19a347; }
.m-record { left: 785px; }
.m-react { left: 865px; }
.tray {
    position: relative;
    display: flex;
    align-items: center;
    gap: 12px;
    padding: 2px 20px 0 0;
}
.tray-text {
    line-height: 17px;
    text-align: center;
}
.clock {
    border-radius: 5px;
    background: linear-gradient(rgba(110,130,60,0.4) 25px, transparent 25px);
}
```
